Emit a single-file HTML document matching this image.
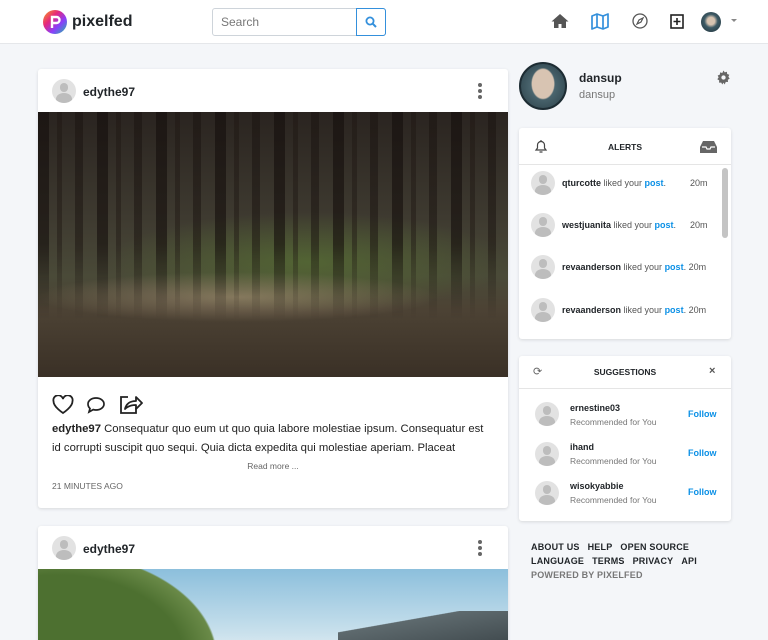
<!DOCTYPE html>
<html><head><meta charset="utf-8"><style>
*{box-sizing:border-box;margin:0;padding:0}
html,body{width:768px;height:640px;overflow:hidden}
body{background:#f4f6f9;font-family:"Liberation Sans",sans-serif;color:#212529;position:relative}
.a{position:absolute}
.card{position:absolute;background:#fff;box-shadow:0 1px 3px rgba(0,0,0,.12);border-radius:3px;overflow:hidden}
.av{position:absolute;border-radius:50%;background:#e2e2e2;overflow:hidden}
.av:before{content:"";position:absolute;left:32%;top:18%;width:36%;height:36%;border-radius:50%;background:#bdbdbd}
.av:after{content:"";position:absolute;left:18%;top:60%;width:64%;height:50%;border-radius:50% 50% 0 0;background:#bdbdbd}
.b{font-weight:bold}
.dots{position:absolute;width:4px}
.dots i{display:block;width:4px;height:4px;border-radius:50%;background:#666;margin-bottom:2px}
.al{position:absolute;left:12px;font-size:9px;color:#555}
.al b{color:#212529}
.al span{color:#0b90e6;font-weight:bold}
.ft{font-size:9px;font-weight:bold;color:#212529;letter-spacing:.2px;white-space:nowrap}
.ft span{margin-right:8px}
</style></head><body>
<div class="a" style="left:0;top:0;width:768px;height:44px;background:#fff;border-bottom:1px solid #e5e7ea"></div>
<svg class="a" style="left:43px;top:10px" width="24" height="24" viewBox="0 0 24 24"><defs><linearGradient id="g" x1="0" y1="0" x2="1" y2="1"><stop offset="0" stop-color="#f9a11b"/><stop offset=".35" stop-color="#e6287a"/><stop offset=".65" stop-color="#8a3ffc"/><stop offset="1" stop-color="#19c3a0"/></linearGradient></defs><circle cx="12" cy="12" r="12" fill="url(#g)"/><path d="M9 18V7h4.5a3 3 0 010 6H9" fill="none" stroke="#fff" stroke-width="2.4"/></svg>
<div class="a b" style="left:72px;top:13px;font-size:16px">pixelfed</div>
<div class="a" style="left:212px;top:8px;width:174px;height:28px;border:1px solid #ced4da;border-radius:3px"></div>
<div class="a" style="left:221px;top:15px;font-size:12px;color:#777">Search</div>
<div class="a" style="left:356px;top:8px;width:30px;height:28px;border:1px solid #3490dc;border-radius:0 3px 3px 0"></div>
<svg class="a" style="left:365px;top:16px" width="12" height="12" viewBox="0 0 12 12"><circle cx="5" cy="5" r="3.6" fill="none" stroke="#3490dc" stroke-width="1.8"/><path d="M7.6 7.6L11 11" stroke="#3490dc" stroke-width="2"/></svg>
<svg class="a" style="left:551px;top:13px" width="18" height="16" viewBox="0 0 18 16"><path d="M9 1L0.5 8.5h2.5V15h4.5v-4h3v4H15V8.5h2.5z" fill="#555"/></svg>
<svg class="a" style="left:591px;top:13px" width="18" height="17" viewBox="0 0 18 17"><path d="M1 3l5-2 6 2 5-2v13l-5 2-6-2-5 2z M6 1v13 M12 3v13" fill="none" stroke="#3490dc" stroke-width="1.7" stroke-linejoin="round"/></svg>
<svg class="a" style="left:632px;top:13px" width="16" height="16" viewBox="0 0 16 16"><circle cx="8" cy="8" r="7" fill="none" stroke="#555" stroke-width="1.3"/><path d="M11 5L9 9 5 11l2-4z" fill="none" stroke="#555" stroke-width="1.2"/></svg>
<svg class="a" style="left:670px;top:14px" width="14" height="15" viewBox="0 0 14 15"><rect x="1" y="1" width="12" height="13" fill="none" stroke="#222" stroke-width="1.6"/><path d="M7 4v7M3.5 7.5h7" stroke="#222" stroke-width="1.6"/></svg>
<div class="a" style="left:701px;top:12px;width:20px;height:20px;border-radius:50%;background:radial-gradient(circle at 50% 45%,#d6c3b0 0 25%,#3d5a65 45%,#1f3038)"></div>
<div class="a" style="left:731px;top:19px;border:3px solid transparent;border-top:3px solid #888"></div>

<!-- post 1 -->
<div class="card" style="left:38px;top:69px;width:470px;height:439px">
 <div class="av" style="left:14px;top:10px;width:24px;height:24px"></div>
 <div class="a b" style="left:45px;top:16px;font-size:12px">edythe97</div>
 <div class="dots" style="left:440px;top:14px"><i></i><i></i><i></i></div>
 <div class="a" style="left:0;top:43px;width:470px;height:265px;background:
  radial-gradient(ellipse 200px 25px at 200px 185px,rgba(170,150,120,.6),transparent),
  radial-gradient(ellipse 200px 50px at 270px 150px,rgba(90,120,50,.6),transparent),
  linear-gradient(180deg,#2a2420 0%,#3e3a30 40%,#4a4a38 62%,#4c4234 75%,#3a3026 100%)"></div>
 <div class="a" style="left:0;top:43px;width:470px;height:265px;background:repeating-linear-gradient(90deg,rgba(20,14,12,.6) 0 11px,transparent 11px 19px,rgba(30,22,18,.45) 19px 24px,transparent 24px 37px,rgba(25,18,15,.5) 37px 45px,transparent 45px 59px);-webkit-mask:linear-gradient(#000 50%,transparent 78%)"></div>
 <svg class="a" style="left:14px;top:326px" width="22" height="20" viewBox="0 0 22 20"><path d="M11 18S1.5 12 1.5 6.2A4.7 4.7 0 0111 4a4.7 4.7 0 019.5 2.2C20.5 12 11 18 11 18z" fill="none" stroke="#222" stroke-width="1.8"/></svg>
 <svg class="a" style="left:48px;top:327px" width="20" height="18" viewBox="0 0 20 18"><path d="M10 2c4.7 0 8 2.8 8 6s-3.3 6-8 6c-1 0-2-.1-2.8-.4L3 16l1-3.5C2.7 11.3 2 9.7 2 8c0-3.2 3.3-6 8-6z" fill="none" stroke="#222" stroke-width="1.7"/></svg>
 <svg class="a" style="left:81px;top:325px" width="24" height="21" viewBox="0 0 24 21"><path d="M9 3H2v16h15v-5" fill="none" stroke="#222" stroke-width="1.8"/><path d="M6 15c1-5 5-8 11-8V3l6 6-6 6v-4c-5 0-8 1-11 4z" fill="none" stroke="#222" stroke-width="1.8" stroke-linejoin="round"/></svg>
 <div class="a" style="left:14px;top:351px;width:450px;font-size:11.3px;line-height:19px;color:#222;white-space:nowrap"><b>edythe97</b> Consequatur quo eum ut quo quia labore molestiae ipsum. Consequatur est<br>id corrupti suscipit quo sequi. Quia dicta expedita qui molestiae aperiam. Placeat</div>
 <div class="a" style="left:0;width:470px;top:392px;text-align:center;font-size:8.5px;color:#666">Read more ...</div>
 <div class="a" style="left:14px;top:412px;font-size:8.5px;color:#666">21 MINUTES AGO</div>
</div>

<!-- post 2 -->
<div class="card" style="left:38px;top:526px;width:470px;height:130px">
 <div class="av" style="left:14px;top:10px;width:24px;height:24px"></div>
 <div class="a b" style="left:45px;top:16px;font-size:12px">edythe97</div>
 <div class="dots" style="left:440px;top:14px"><i></i><i></i><i></i></div>
 <div class="a" style="left:0;top:43px;width:470px;height:90px;background:linear-gradient(180deg,#8cbfdc,#c8e0ec 70%,#e8f0f4)"></div>
 <div class="a" style="left:300px;top:85px;width:170px;height:40px;background:linear-gradient(170deg,transparent 30%,#5e6a6e 31%,#3b4448)"></div>
 <div class="a" style="left:0;top:43px;width:210px;height:90px;background:radial-gradient(ellipse 210px 140px at 20px 90px,#4d7030 0 60%,#6a8a48 75%,transparent 76%)"></div>
</div>

<!-- profile -->
<div class="a" style="left:519px;top:62px;width:48px;height:48px;border-radius:50%;background:radial-gradient(ellipse 12px 16px at 50% 45%,#d8c4b2 0 90%,transparent 100%),radial-gradient(circle,#5e7e88,#2a3e46);border:2px solid #1d2c33"></div>
<div class="a b" style="left:579px;top:71px;font-size:12px">dansup</div>
<div class="a" style="left:579px;top:89px;font-size:11px;color:#777">dansup</div>
<svg class="a" style="left:716px;top:70px" width="15" height="15" viewBox="0 0 16 16"><path d="M8 0.5l1.3 2 2.3-.7.3 2.4 2.3.9-1 2.1 1.4 2-2 1.2.2 2.4-2.4-.1L9.3 15.5 8 13.5l-1.3 2-1.1-2.1-2.4.1.2-2.4-2-1.2 1.4-2-1-2.1 2.3-.9.3-2.4 2.3.7z" fill="#666"/><circle cx="8" cy="8" r="2.3" fill="#f4f6f9"/></svg>

<!-- alerts -->
<div class="card" style="left:519px;top:128px;width:212px;height:211px">
 <div class="a" style="left:0;top:36px;width:212px;border-top:1px solid #e5e5e5"></div>
 <svg class="a" style="left:15px;top:11px" width="14" height="15" viewBox="0 0 14 15"><path d="M2 11h10l-1.5-2V6a3.5 3.5 0 00-7 0v3zM5.5 13h3M7 1v1" fill="none" stroke="#444" stroke-width="1.2"/></svg>
 <div class="a b" style="left:0;width:212px;text-align:center;top:14px;font-size:8.5px">ALERTS</div>
 <svg class="a" style="left:181px;top:13px" width="17" height="12" viewBox="0 0 17 12"><path d="M3 0h11l3 6v6H0V6z" fill="#666"/><path d="M2 6h4l1 2h3l1-2h4" fill="none" stroke="#fff" stroke-width="1.2"/></svg>
 <div class="a" style="left:203px;top:40px;width:6px;height:70px;border-radius:3px;background:#c4c4c4"></div>
 <div class="av" style="left:12px;top:43px;width:24px;height:24px"></div>
 <div class="al" style="left:43px;top:50px"><b>qturcotte</b> liked your <span>post</span>.</div>
 <div class="al" style="left:171px;top:50px">20m</div>
 <div class="av" style="left:12px;top:85px;width:24px;height:24px"></div>
 <div class="al" style="left:43px;top:92px"><b>westjuanita</b> liked your <span>post</span>.</div>
 <div class="al" style="left:171px;top:92px">20m</div>
 <div class="av" style="left:12px;top:127px;width:24px;height:24px"></div>
 <div class="al" style="left:43px;top:134px"><b>revaanderson</b> liked your <span>post</span>. 20m</div>
 <div class="av" style="left:12px;top:170px;width:24px;height:24px"></div>
 <div class="al" style="left:43px;top:177px"><b>revaanderson</b> liked your <span>post</span>. 20m</div>
</div>

<!-- suggestions -->
<div class="card" style="left:519px;top:356px;width:212px;height:165px">
 <div class="a" style="left:0;top:32px;width:212px;border-top:1px solid #e5e5e5"></div>
 <div class="a" style="left:14px;top:9px;font-size:11px;color:#666">⟳</div>
 <div class="a b" style="left:0;width:212px;text-align:center;top:11px;font-size:8.5px">SUGGESTIONS</div>
 <div class="a b" style="left:190px;top:9px;font-size:11px;color:#555">×</div>
 <div class="av" style="left:16px;top:46px;width:24px;height:24px"></div>
 <div class="a b" style="left:51px;top:47px;font-size:9px">ernestine03</div>
 <div class="a" style="left:51px;top:61px;font-size:8.5px;color:#777">Recommended for You</div>
 <div class="a b" style="left:169px;top:53px;font-size:9px;color:#0b90e6">Follow</div>
 <div class="av" style="left:16px;top:86px;width:24px;height:24px"></div>
 <div class="a b" style="left:51px;top:86px;font-size:9px">ihand</div>
 <div class="a" style="left:51px;top:100px;font-size:8.5px;color:#777">Recommended for You</div>
 <div class="a b" style="left:169px;top:92px;font-size:9px;color:#0b90e6">Follow</div>
 <div class="av" style="left:16px;top:125px;width:24px;height:24px"></div>
 <div class="a b" style="left:51px;top:125px;font-size:9px">wisokyabbie</div>
 <div class="a" style="left:51px;top:139px;font-size:8.5px;color:#777">Recommended for You</div>
 <div class="a b" style="left:169px;top:131px;font-size:9px;color:#0b90e6">Follow</div>
</div>

<div class="a ft" style="left:531px;top:542px"><span>ABOUT US</span><span>HELP</span><span>OPEN SOURCE</span></div>
<div class="a ft" style="left:531px;top:556px"><span>LANGUAGE</span><span>TERMS</span><span>PRIVACY</span><span>API</span></div>
<div class="a ft" style="left:531px;top:570px;color:#777">POWERED BY PIXELFED</div>
</body></html>
